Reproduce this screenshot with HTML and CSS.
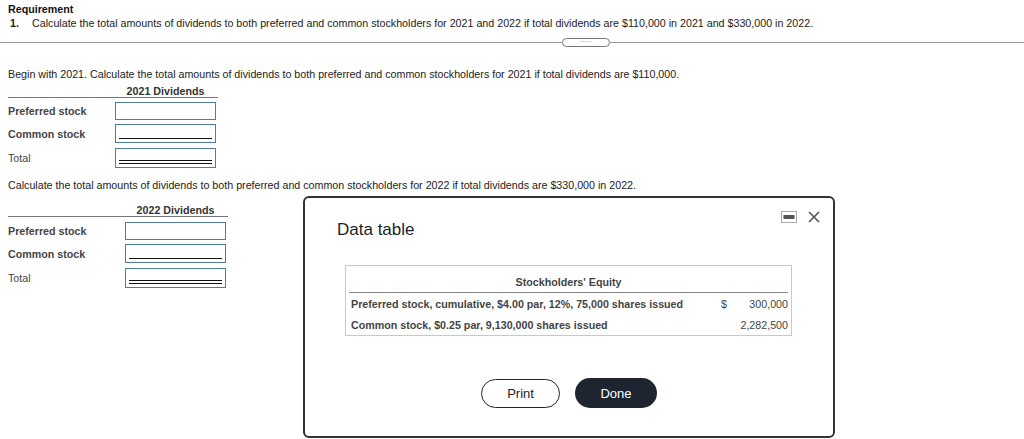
FILE: index.html
```html
<!DOCTYPE html>
<html>
<head>
<meta charset="utf-8">
<link rel="stylesheet" href="styles.css">
</head>
<body>
<div class="page">
  <div class="req">
    <div class="req-title">Requirement</div>
    <div class="req-item"><span class="num">1.</span><span>Calculate the total amounts of dividends to both preferred and common stockholders for 2021 and 2022 if total dividends are $110,000 in 2021 and $330,000 in 2022.</span></div>
  </div>
  <div class="divider"><span class="pill">·····</span></div>

  <p class="instr first">Begin with 2021. Calculate the total amounts of dividends to both preferred and common stockholders for 2021 if total dividends are $110,000.</p>
  <div class="dtable t2021">
    <div class="dhead"><span class="hlabel"></span><span class="hcol">2021 Dividends</span></div>
    <div class="drow"><span class="lbl">Preferred stock</span><span class="inp"></span></div>
    <div class="drow"><span class="lbl">Common stock</span><span class="inp single"><span class="ul"></span></span></div>
    <div class="drow"><span class="lbl normal">Total</span><span class="inp double"><span class="ul"></span></span></div>
  </div>

  <p class="instr second">Calculate the total amounts of dividends to both preferred and common stockholders for 2022 if total dividends are $330,000 in 2022.</p>
  <div class="dtable t2022">
    <div class="dhead"><span class="hlabel"></span><span class="hcol">2022 Dividends</span></div>
    <div class="drow"><span class="lbl">Preferred stock</span><span class="inp"></span></div>
    <div class="drow"><span class="lbl">Common stock</span><span class="inp single"><span class="ul"></span></span></div>
    <div class="drow"><span class="lbl normal">Total</span><span class="inp double"><span class="ul"></span></span></div>
  </div>
</div>

<div class="modal">
  <div class="modal-tools">
    <svg class="min-icon" width="16" height="12" viewBox="0 0 16 12"><rect x="0.5" y="0.5" width="15" height="11" fill="none" stroke="#555" stroke-width="1" stroke-dasharray="1 1"/><rect x="2.5" y="4" width="11" height="4" fill="#555"/></svg>
    <svg class="close-icon" width="12" height="12" viewBox="0 0 12 12"><path d="M1 1 L11 11 M11 1 L1 11" stroke="#555" stroke-width="1.6" fill="none"/></svg>
  </div>
  <h2 class="modal-title">Data table</h2>
  <div class="equity">
    <div class="eq-head">Stockholders' Equity</div>
    <div class="eq-row"><span class="eq-lbl">Preferred stock, cumulative, $4.00 par, 12%, 75,000 shares issued</span><span class="eq-cur">$</span><span class="eq-val">300,000</span></div>
    <div class="eq-row"><span class="eq-lbl">Common stock, $0.25 par, 9,130,000 shares issued</span><span class="eq-cur"></span><span class="eq-val">2,282,500</span></div>
  </div>
  <div class="btns">
    <button class="btn print">Print</button>
    <button class="btn done">Done</button>
  </div>
</div>
</body>
</html>
```

FILE: styles.css
```css
html, body { margin: 0; padding: 0; background: #fff; }
body { font-family: "Liberation Sans", Arial, sans-serif; color: #222; font-size: 10.7px; }
.page { padding: 3px 0 0 0; }
.req { padding-left: 8px; }
.req-title { font-weight: bold; font-size: 10.7px; line-height: 12px; color: #111; }
.req-item { display: flex; line-height: 14px; margin-top: 1px; }
.req-item .num { width: 24px; font-weight: bold; padding-left: 2px; box-sizing: border-box; }
.divider { position: relative; margin-top: 8px; height: 9px; display: flex; align-items: center; justify-content: center; }
.divider::before { content: ""; position: absolute; left: 0; right: 0; top: 4px; height: 1px; background: #999; }
.pill { position: relative; margin-left: 148px; width: 46px; height: 7px; border: 1px solid #777; border-radius: 5px; background: #fff; font-size: 7px; line-height: 5px; text-align: center; color: #555; letter-spacing: 0; }
.instr { margin: 0; padding-left: 8px; line-height: 14px; color: #222; }
.instr.first { margin-top: 20px; }
.instr.second { margin-top: 10px; }
.dtable { padding-left: 8px; margin-top: 2px; }
.dhead { display: flex; align-items: flex-end; border-bottom: 1px solid #777; font-weight: bold; color: #333; height: 14px; }
.t2021 .dhead { width: 210px; }
.t2022 .dhead { width: 220px; margin-top: 10px; }
.hlabel { width: 107px; }
.t2022 .hlabel { width: 117px; }
.hcol { width: 101px; text-align: center; line-height: 12px; }
.drow { display: flex; align-items: center; margin-top: 4px; }
.drow:nth-child(4) { margin-top: 5px; }
.t2022 .drow:nth-child(2) { margin-top: 5px; }
.drow .lbl { width: 107px; font-weight: bold; color: #444; }
.t2022 .drow .lbl { width: 117px; }
.drow .lbl.normal { font-weight: normal; }
.inp { position: relative; width: 99px; height: 16px; border: 1px solid #4f7d99; background: #fff; }
.drow:nth-child(3) .inp { height: 17px; }
.drow:nth-child(4) .inp { height: 18px; }
.inp .ul { position: absolute; left: 3px; right: 3px; bottom: 3px; border-bottom: 1px solid #111; }
.inp.double .ul { height: 2px; border-top: 1px solid #111; }
.modal { position: absolute; left: 303px; top: 196px; width: 528px; height: 238px; border: 2px solid #333; border-radius: 6px; background: #fff; }
.modal-tools { position: absolute; top: 13px; right: 13px; display: flex; align-items: center; gap: 11px; }
.modal-title { margin: 23px 0 0 32px; font-weight: normal; font-size: 17px; line-height: 18px; color: #1a1f2a; }
.equity { margin: 26px 0 0 40px; width: 447px; height: 71px; border: 1px solid #c8c8c8; box-sizing: border-box; padding: 0 3px; }
.eq-head { text-align: center; font-weight: bold; color: #444; margin-top: 9px; line-height: 14px; padding-bottom: 3px; border-bottom: 1px solid #888; }
.eq-row { display: flex; line-height: 14px; margin-top: 4px; }
.eq-row + .eq-row { margin-top: 7px; }
.eq-lbl { width: 370px; font-weight: bold; color: #444; padding-left: 2px; }
.eq-cur { width: 12px; color: #444; }
.eq-val { flex: 1; text-align: right; color: #444; }
.btns { display: flex; justify-content: center; gap: 15px; margin-top: 42px; }
.btn { font-family: "Liberation Sans", Arial, sans-serif; font-size: 13px; border-radius: 15px; height: 30px; padding: 0; cursor: pointer; }
.btn.print { width: 79px; border: 1.5px solid #222; background: #fff; color: #222; margin-top: 1px; height: 29px; }
.btn.done { width: 82px; border: none; background: #1e2530; color: #fff; }
```
